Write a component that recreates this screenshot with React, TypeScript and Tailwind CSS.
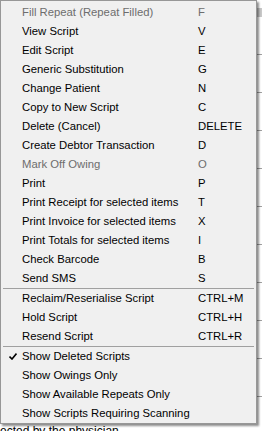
type Item = { label: string; key?: string; disabled?: boolean; checked?: boolean } | 'sep'

const items: Item[] = [
  { label: 'Fill Repeat (Repeat Filled)', key: 'F', disabled: true },
  { label: 'View Script', key: 'V' },
  { label: 'Edit Script', key: 'E' },
  { label: 'Generic Substitution', key: 'G' },
  { label: 'Change Patient', key: 'N' },
  { label: 'Copy to New Script', key: 'C' },
  { label: 'Delete (Cancel)', key: 'DELETE' },
  { label: 'Create Debtor Transaction', key: 'D' },
  { label: 'Mark Off Owing', key: 'O', disabled: true },
  { label: 'Print', key: 'P' },
  { label: 'Print Receipt for selected items', key: 'T' },
  { label: 'Print Invoice for selected items', key: 'X' },
  { label: 'Print Totals for selected items', key: 'I' },
  { label: 'Check Barcode', key: 'B' },
  { label: 'Send SMS', key: 'S' },
  'sep',
  { label: 'Reclaim/Reserialise Script', key: 'CTRL+M' },
  { label: 'Hold Script', key: 'CTRL+H' },
  { label: 'Resend Script', key: 'CTRL+R' },
  'sep',
  { label: 'Show Deleted Scripts', checked: true },
  { label: 'Show Owings Only' },
  { label: 'Show Available Repeats Only' },
  { label: 'Show Scripts Requiring Scanning' },
]

export default function App() {
  return (
    <div
      className="relative h-[431px] w-[262px] overflow-hidden bg-white text-[11.3px] text-black"
      style={{ fontFamily: '"Liberation Sans", Arial, sans-serif' }}
    >
      {/* Grid behind the menu */}
      <div className="h-[8px]" />
      <div className="h-[9px] bg-[#c8c8c8]" />
      <div className="flex flex-col">
        {Array.from({ length: 10 }).map((_, i) => (
          <div key={i} className="h-[38px] border-b border-[#a0a0a0]" />
        ))}
      </div>
      <div className="absolute left-0 top-[424px] text-[12px] leading-[14px]">ected by the physician</div>

      {/* Context menu */}
      <div className="absolute left-0 top-0 w-[257px] border border-[#979797] bg-[#f0f0f0] pt-[2px] shadow-[2px_2px_2px_rgba(0,0,0,0.45)]">
        {items.map((item, i) =>
          item === 'sep' ? (
            <div key={i} className="mx-[2px] h-px bg-[#a0a0a0]" />
          ) : (
            <div
              key={i}
              className={`relative flex h-[19px] items-center ${item.disabled ? 'text-[#6d6d6d]' : 'text-black'}`}
            >
              {item.checked && (
                <svg className="absolute left-[8px] top-[6px]" width="8" height="7" viewBox="0 0 8 7">
                  <path d="M0.5 3.5 L3 6 L7.5 0.5" fill="none" stroke="#000" strokeWidth="1.6" />
                </svg>
              )}
              <span className="pl-[21px]">{item.label}</span>
              {item.key && <span className="absolute left-[197px]">{item.key}</span>}
            </div>
          ),
        )}
      </div>
    </div>
  )
}
